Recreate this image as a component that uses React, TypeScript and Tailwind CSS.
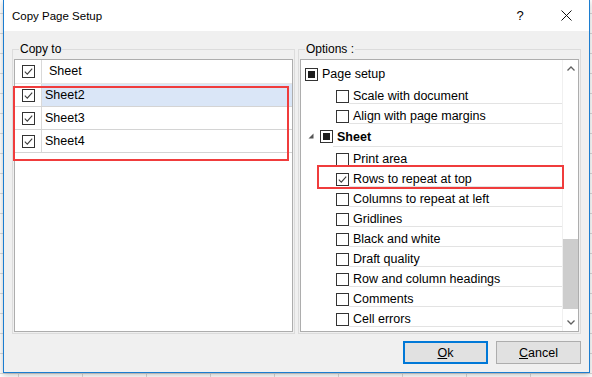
import React from 'react';

type CheckState = 'checked' | 'unchecked' | 'mixed';

const CheckBox: React.FC<{ state: CheckState; className?: string }> = ({ state, className = '' }) => (
    <span className={`w-[13px] h-[13px] border border-[#333333] bg-white flex items-center justify-center shrink-0 ${className}`}>
        {state === 'checked' && (
            <svg width="11" height="11" viewBox="0 0 11 11">
                <path d="M1.8 5.6 L4.3 8.1 L9.2 2.6" fill="none" stroke="#3c3c3c" strokeWidth="1.1" />
            </svg>
        )}
        {state === 'mixed' && <span className="w-[7px] h-[7px] bg-[#1e1e1e]" />}
    </span>
);

const sheetRows = [
    { name: 'Sheet2', selected: true },
    { name: 'Sheet3', selected: false },
    { name: 'Sheet4', selected: false },
];

const pageSetupItems = ['Scale with document', 'Align with page margins'];

const sheetItems = [
    { label: 'Print area', checked: false },
    { label: 'Rows to repeat at top', checked: true },
    { label: 'Columns to repeat at left', checked: false },
    { label: 'Gridlines', checked: false },
    { label: 'Black and white', checked: false },
    { label: 'Draft quality', checked: false },
    { label: 'Row and column headings', checked: false },
    { label: 'Comments', checked: false },
    { label: 'Cell errors', checked: false },
];

const OptionRow: React.FC<{ label: string; checked: boolean }> = ({ label, checked }) => (
    <div className="flex h-[20px] items-end pl-[35px]">
        <CheckBox state={checked ? 'checked' : 'unchecked'} className="mb-[1px]" />
        <div className="flex-1 self-stretch flex items-end pl-[4px] border-b border-[#e3e3e3]">
            <span className="leading-[14px] text-[12.5px]">{label}</span>
        </div>
    </div>
);

const App: React.FC = () => {
    return (
        <div className="w-[592px] h-[377px] overflow-hidden bg-white bg-[linear-gradient(to_right,#dadada_1px,transparent_1px),linear-gradient(to_bottom,#dadada_1px,transparent_1px)] bg-size-[64px_20px] bg-position-[18px_13px] font-['Liberation_Sans',Arial,sans-serif] text-[12px] text-black">
            <div className="ml-[3px] w-[587px] h-[373px] flex flex-col border-x border-b border-[#1c7dd0] shadow-[0_2px_6px_rgba(0,0,0,0.25)]">
                {/* Title bar */}
                <div className="h-[31px] bg-white flex items-center shrink-0">
                    <span className="flex-1 pl-[8px] leading-[14px] text-[11.5px]">Copy Page Setup</span>
                    <div className="w-[46px] h-full flex items-center justify-center text-[13px]">?</div>
                    <div className="w-[46px] h-full flex items-center justify-center">
                        <svg width="11" height="11" viewBox="0 0 11 11">
                            <path d="M0.5 0.5 L10.5 10.5 M10.5 0.5 L0.5 10.5" stroke="#111" strokeWidth="1" />
                        </svg>
                    </div>
                </div>

                {/* Body */}
                <div className="flex-1 bg-[#f0f0f0] flex flex-col px-[8px]">
                    <div className="mt-[11px] flex gap-[3px]">
                        {/* Copy to */}
                        <fieldset className="w-[283px] border border-[#dcdcdc] px-[1px] pb-[1px]">
                            <legend className="ml-[5px] px-[1px] leading-[14px]">Copy to</legend>
                            <div className="relative mt-[3px] h-[273px] border border-[#adadad] bg-white text-[12.5px]">
                                <div className="flex h-[24px] border-b border-[#e6e6e6]">
                                    <div className="w-[27px] border-r border-[#d9d9d9] flex items-center justify-center">
                                        <CheckBox state="checked" />
                                    </div>
                                    <div className="flex-1 flex items-center pl-[7px]">Sheet</div>
                                </div>
                                {sheetRows.map((row) => (
                                    <div key={row.name} className="flex h-[23px] border-b border-[#d4d4d4]">
                                        <div className="w-[27px] border-r border-[#d9d9d9] flex items-center justify-center">
                                            <CheckBox state="checked" />
                                        </div>
                                        <div className={`flex-1 flex items-center pl-[3px] ${row.selected ? 'bg-[#dae6f7]' : ''}`}>
                                            {row.name}
                                        </div>
                                    </div>
                                ))}
                                <div className="absolute left-[-2px] top-[26px] w-[276px] h-[75px] border-2 border-[#f03c3c]" />
                            </div>
                        </fieldset>

                        {/* Options */}
                        <fieldset className="w-[283px] border border-[#dcdcdc] px-[1px] pb-[1px]">
                            <legend className="ml-[5px] px-[1px] leading-[14px]">Options :</legend>
                            <div className="relative mt-[3px] h-[273px] border border-[#adadad] bg-white flex">
                                <div className="flex-1 flex flex-col">
                                    <div className="flex h-[24px] items-end pb-[3px] pl-[4px]">
                                        <CheckBox state="mixed" />
                                        <span className="pl-[4px] leading-[14px] text-[12.5px]">Page setup</span>
                                    </div>
                                    {pageSetupItems.map((label) => (
                                        <OptionRow key={label} label={label} checked={false} />
                                    ))}
                                    <div className="flex h-[23px] items-end pl-[7px]">
                                        <svg width="6" height="6" viewBox="0 0 6 6" className="mb-[8px] mr-[6px] shrink-0">
                                            <polygon points="5.5,0.5 5.5,5.5 0.5,5.5" fill="#555" />
                                        </svg>
                                        <CheckBox state="mixed" className="mb-[4px]" />
                                        <div className="flex-1 self-stretch flex items-end pl-[4px] pb-[2px] border-b border-[#e3e3e3]">
                                            <span className="leading-[14px] text-[12.5px] font-bold">Sheet</span>
                                        </div>
                                    </div>
                                    {sheetItems.map((item) => (
                                        <OptionRow key={item.label} label={item.label} checked={item.checked} />
                                    ))}
                                </div>
                                {/* Scrollbar */}
                                <div className="w-[16px] flex flex-col bg-white border-l border-[#f0f0f0]">
                                    <div className="h-[17px] flex items-center justify-center">
                                        <svg width="8" height="5" viewBox="0 0 8 5">
                                            <path d="M0.5 4.5 L4 1 L7.5 4.5" fill="none" stroke="#606060" strokeWidth="1.3" />
                                        </svg>
                                    </div>
                                    <div className="flex-1 flex flex-col justify-end pb-[5px]">
                                        <div className="h-[70px] bg-[#cdcdcd]" />
                                    </div>
                                    <div className="h-[17px] flex items-center justify-center">
                                        <svg width="8" height="5" viewBox="0 0 8 5">
                                            <path d="M0.5 0.5 L4 4 L7.5 0.5" fill="none" stroke="#606060" strokeWidth="1.3" />
                                        </svg>
                                    </div>
                                </div>
                                <div className="absolute left-[16px] top-[105px] w-[247px] h-[24px] border-2 border-[#f03c3c]" />
                            </div>
                        </fieldset>
                    </div>

                    {/* Buttons */}
                    <div className="mt-[7px] flex justify-end gap-[8px]">
                        <button className="w-[85px] h-[23px] border-2 border-[#0078d7] bg-[#e1e1e1] flex items-center justify-center leading-[14px] text-[12.5px]">
                            <span><span className="underline">O</span>k</span>
                        </button>
                        <button className="w-[85px] h-[23px] border border-[#adadad] bg-[#e1e1e1] flex items-center justify-center leading-[14px] text-[12.5px]">
                            <span><span className="underline">C</span>ancel</span>
                        </button>
                    </div>
                </div>
            </div>
        </div>
    );
};

export default App;
